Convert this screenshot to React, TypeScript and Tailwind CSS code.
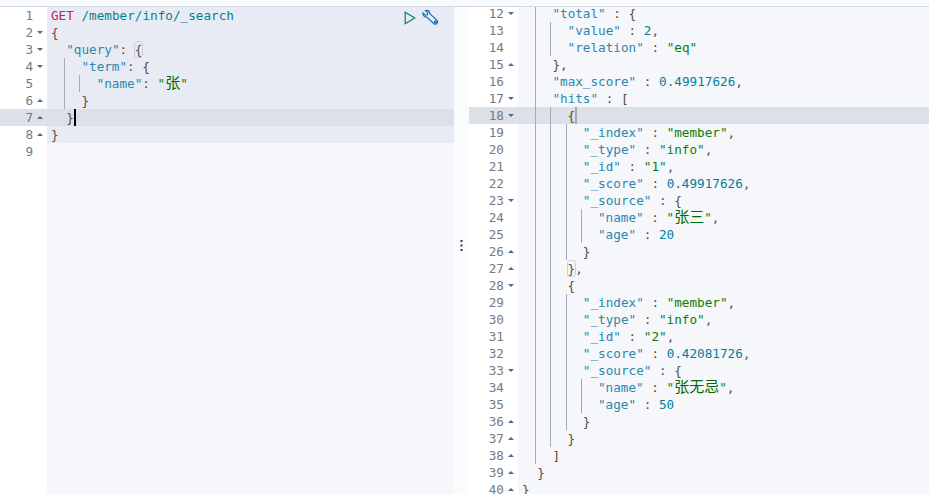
import React from "react";

type Kind = "m" | "u" | "k" | "p" | "s" | "n" | "c" | "b";
type Tok = [Kind, string];
type Line = {
  indent: number;
  guides?: number[];
  fold?: "down" | "up";
  toks: Tok[];
  active?: boolean;
  inBlock?: boolean;
};

const color: Record<Kind, string> = {
  m: "text-[#c5205f]",
  u: "text-[#00838f]",
  k: "text-[#2a87ad]",
  p: "text-[#5d4a3c]",
  s: "text-[#0a7f0a]",
  n: "text-[#00809a]",
  c: "text-[#006b00] text-[15px]",
  b: "text-[#5d4a3c] rounded-[2px] outline outline-1 outline-[#c9cfda]", // matched bracket
};

const kv = (key: string, val: Tok[], sep = " : "): Tok[] => [
  ["k", `"${key}"`],
  ["p", sep],
  ...val,
];
const str = (v: string, comma = true): Tok[] => [
  ["s", `"${v}"`],
  ...(comma ? ([["p", ","]] as Tok[]) : []),
];

const left: Line[] = [
  { indent: 0, toks: [["m", "GET"], ["u", " /member/info/_search"]], inBlock: true },
  { indent: 0, fold: "down", toks: [["p", "{"]], inBlock: true },
  { indent: 1, fold: "down", toks: kv("query", [["b", "{"]], ": "), inBlock: true },
  { indent: 2, fold: "down", guides: [1], toks: kv("term", [["p", "{"]], ": "), inBlock: true },
  {
    indent: 3,
    guides: [1, 2],
    toks: [["k", '"name"'], ["p", ": "], ["s", '"'], ["c", "张"], ["s", '"']],
    inBlock: true,
  },
  { indent: 2, fold: "up", guides: [1], toks: [["p", "}"]], inBlock: true },
  { indent: 1, fold: "up", toks: [["p", "}"]], active: true },
  { indent: 0, fold: "up", toks: [["p", "}"]], inBlock: true },
  { indent: 0, toks: [] },
];

const right: Line[] = [
  { indent: 2, guides: [1], fold: "down", toks: kv("total", [["p", "{"]]) },
  { indent: 3, guides: [1, 2], toks: kv("value", [["n", "2"], ["p", ","]]) },
  { indent: 3, guides: [1, 2], toks: kv("relation", str("eq", false)) },
  { indent: 2, guides: [1], fold: "up", toks: [["p", "},"]] },
  { indent: 2, guides: [1], toks: kv("max_score", [["n", "0.49917626"], ["p", ","]]) },
  { indent: 2, guides: [1], fold: "down", toks: kv("hits", [["p", "["]]) },
  { indent: 3, guides: [1, 2], fold: "down", toks: [["p", "{"]], active: true },
  { indent: 4, guides: [1, 2, 3], toks: kv("_index", str("member")) },
  { indent: 4, guides: [1, 2, 3], toks: kv("_type", str("info")) },
  { indent: 4, guides: [1, 2, 3], toks: kv("_id", str("1")) },
  { indent: 4, guides: [1, 2, 3], toks: kv("_score", [["n", "0.49917626"], ["p", ","]]) },
  { indent: 4, guides: [1, 2, 3], fold: "down", toks: kv("_source", [["p", "{"]]) },
  {
    indent: 5,
    guides: [1, 2, 3, 4],
    toks: kv("name", [["s", '"'], ["c", "张三"], ["s", '"'], ["p", ","]]),
  },
  { indent: 5, guides: [1, 2, 3, 4], toks: kv("age", [["n", "20"]]) },
  { indent: 4, guides: [1, 2, 3], fold: "up", toks: [["p", "}"]] },
  { indent: 3, guides: [1, 2], fold: "up", toks: [["b", "}"], ["p", ","]] },
  { indent: 3, guides: [1, 2], fold: "down", toks: [["p", "{"]] },
  { indent: 4, guides: [1, 2, 3], toks: kv("_index", str("member")) },
  { indent: 4, guides: [1, 2, 3], toks: kv("_type", str("info")) },
  { indent: 4, guides: [1, 2, 3], toks: kv("_id", str("2")) },
  { indent: 4, guides: [1, 2, 3], toks: kv("_score", [["n", "0.42081726"], ["p", ","]]) },
  { indent: 4, guides: [1, 2, 3], fold: "down", toks: kv("_source", [["p", "{"]]) },
  {
    indent: 5,
    guides: [1, 2, 3, 4],
    toks: kv("name", [["s", '"'], ["c", "张无忌"], ["s", '"'], ["p", ","]]),
  },
  { indent: 5, guides: [1, 2, 3, 4], toks: kv("age", [["n", "50"]]) },
  { indent: 4, guides: [1, 2, 3], fold: "up", toks: [["p", "}"]] },
  { indent: 3, guides: [1, 2], fold: "up", toks: [["p", "}"]] },
  { indent: 2, guides: [1], fold: "up", toks: [["p", "]"]] },
  { indent: 1, fold: "up", toks: [["p", "}"]] },
  { indent: 0, fold: "up", toks: [["p", "}"]] },
];

const CHAR = 7.6;

function Fold({ dir }: { dir?: "down" | "up" }) {
  if (!dir) return <span className="w-[6px]" />;
  return (
    <svg width="6" height="3" viewBox="0 0 6 3" className="fill-[#5f6673]">
      <path d={dir === "down" ? "M0 0h6L3 3z" : "M0 3h6L3 0z"} />
    </svg>
  );
}

function Row({ line, no, width, mark }: { line: Line; no: number; width: number; mark?: React.ReactNode }) {
  const rowBg = line.active ? "bg-[#dce0e8]" : line.inBlock ? "bg-[#e8ebf3]" : "";
  return (
    <div className="flex h-[17px] leading-[17px]">
      <div
        className={`flex shrink-0 items-center justify-end gap-[4px] pr-[4px] text-[#737a87] ${
          line.active ? "bg-[#dce0e8]" : "bg-white"
        }`}
        style={{ width }}
      >
        <span>{no}</span>
        <Fold dir={line.fold} />
      </div>
      <div className={`relative min-w-0 flex-1 whitespace-pre pl-[4px] ${rowBg}`}>
        {line.guides?.map((g) => (
          <span
            key={g}
            className="absolute top-0 bottom-0 w-px bg-[#a3aabb]"
            style={{ left: 2 + g * CHAR * 2 }}
          />
        ))}
        <span style={{ paddingLeft: line.indent * CHAR * 2 }}>
          {line.toks.map((t, i) => (
            <span key={i} className={color[t[0]]}>
              {t[1]}
            </span>
          ))}
          {mark}
        </span>
      </div>
    </div>
  );
}

export default function App() {
  return (
    <div className="h-[494px] w-[929px] overflow-hidden bg-white font-['DejaVu_Sans_Mono','Noto_Sans_CJK_SC',monospace] text-[12.67px]">
      <div className="h-[7px] border-b border-[#d3dae6] bg-[#fafbfd]" />
      <div className="flex h-[487px]">
        <div className="relative w-[454px] shrink-0 overflow-hidden bg-[linear-gradient(to_right,#fff_47px,#f5f7fa_47px)]">
          {left.map((l, i) => (
            <Row
              key={i}
              line={l}
              no={i + 1}
              width={47}
              mark={l.active ? <span className="inline-block h-[17px] w-[2px] bg-black align-top" /> : null}
            />
          ))}
          <div className="absolute top-[3px] right-[15px] flex items-center gap-[6px]">
            <svg width="12" height="14" viewBox="0 0 12 14" fill="none" stroke="#017d73" strokeWidth="1.2">
              <path d="M1.2 1.2v11.6L10.8 7z" />
            </svg>
            <svg width="17" height="16" viewBox="0 0 17 16" fill="none" stroke="#006bb4" strokeWidth="1.1">
              <path d="M1 2.9 3.4 5.2l1.9-.5.5-1.9L3.5.6C5.2 0 7 .7 7.5 2.3c.1.4.1.7 0 1.1L15 10.3A2.3 2.3 0 0 1 12 13.7L4.4 6.9C2.5 7.2.6 5 1 2.9z" />
              <circle cx="13.4" cy="12" r="0.9" />
            </svg>
          </div>
        </div>
        <div className="flex w-[15px] shrink-0 items-center justify-center bg-[#fafbfd] pb-[10px]">
          <svg width="3" height="11" viewBox="0 0 3 11" className="fill-[#343741]">
            <rect x="0.5" width="2" height="2" />
            <rect x="0.5" y="4.5" width="2" height="2" />
            <rect x="0.5" y="9" width="2" height="2" />
          </svg>
        </div>
        <div className="min-w-0 flex-1 overflow-hidden bg-[linear-gradient(to_right,#fff_49px,#f5f7fa_49px)]">
          <div className="-mt-[2px]">
            {right.map((l, i) => (
              <Row
                key={i}
                line={l}
                no={i + 12}
                width={49}
                mark={l.active ? <span className="inline-block h-[17px] w-[2px] bg-[#a3aabb] align-top" /> : null}
              />
            ))}
          </div>
        </div>
      </div>
    </div>
  );
}
